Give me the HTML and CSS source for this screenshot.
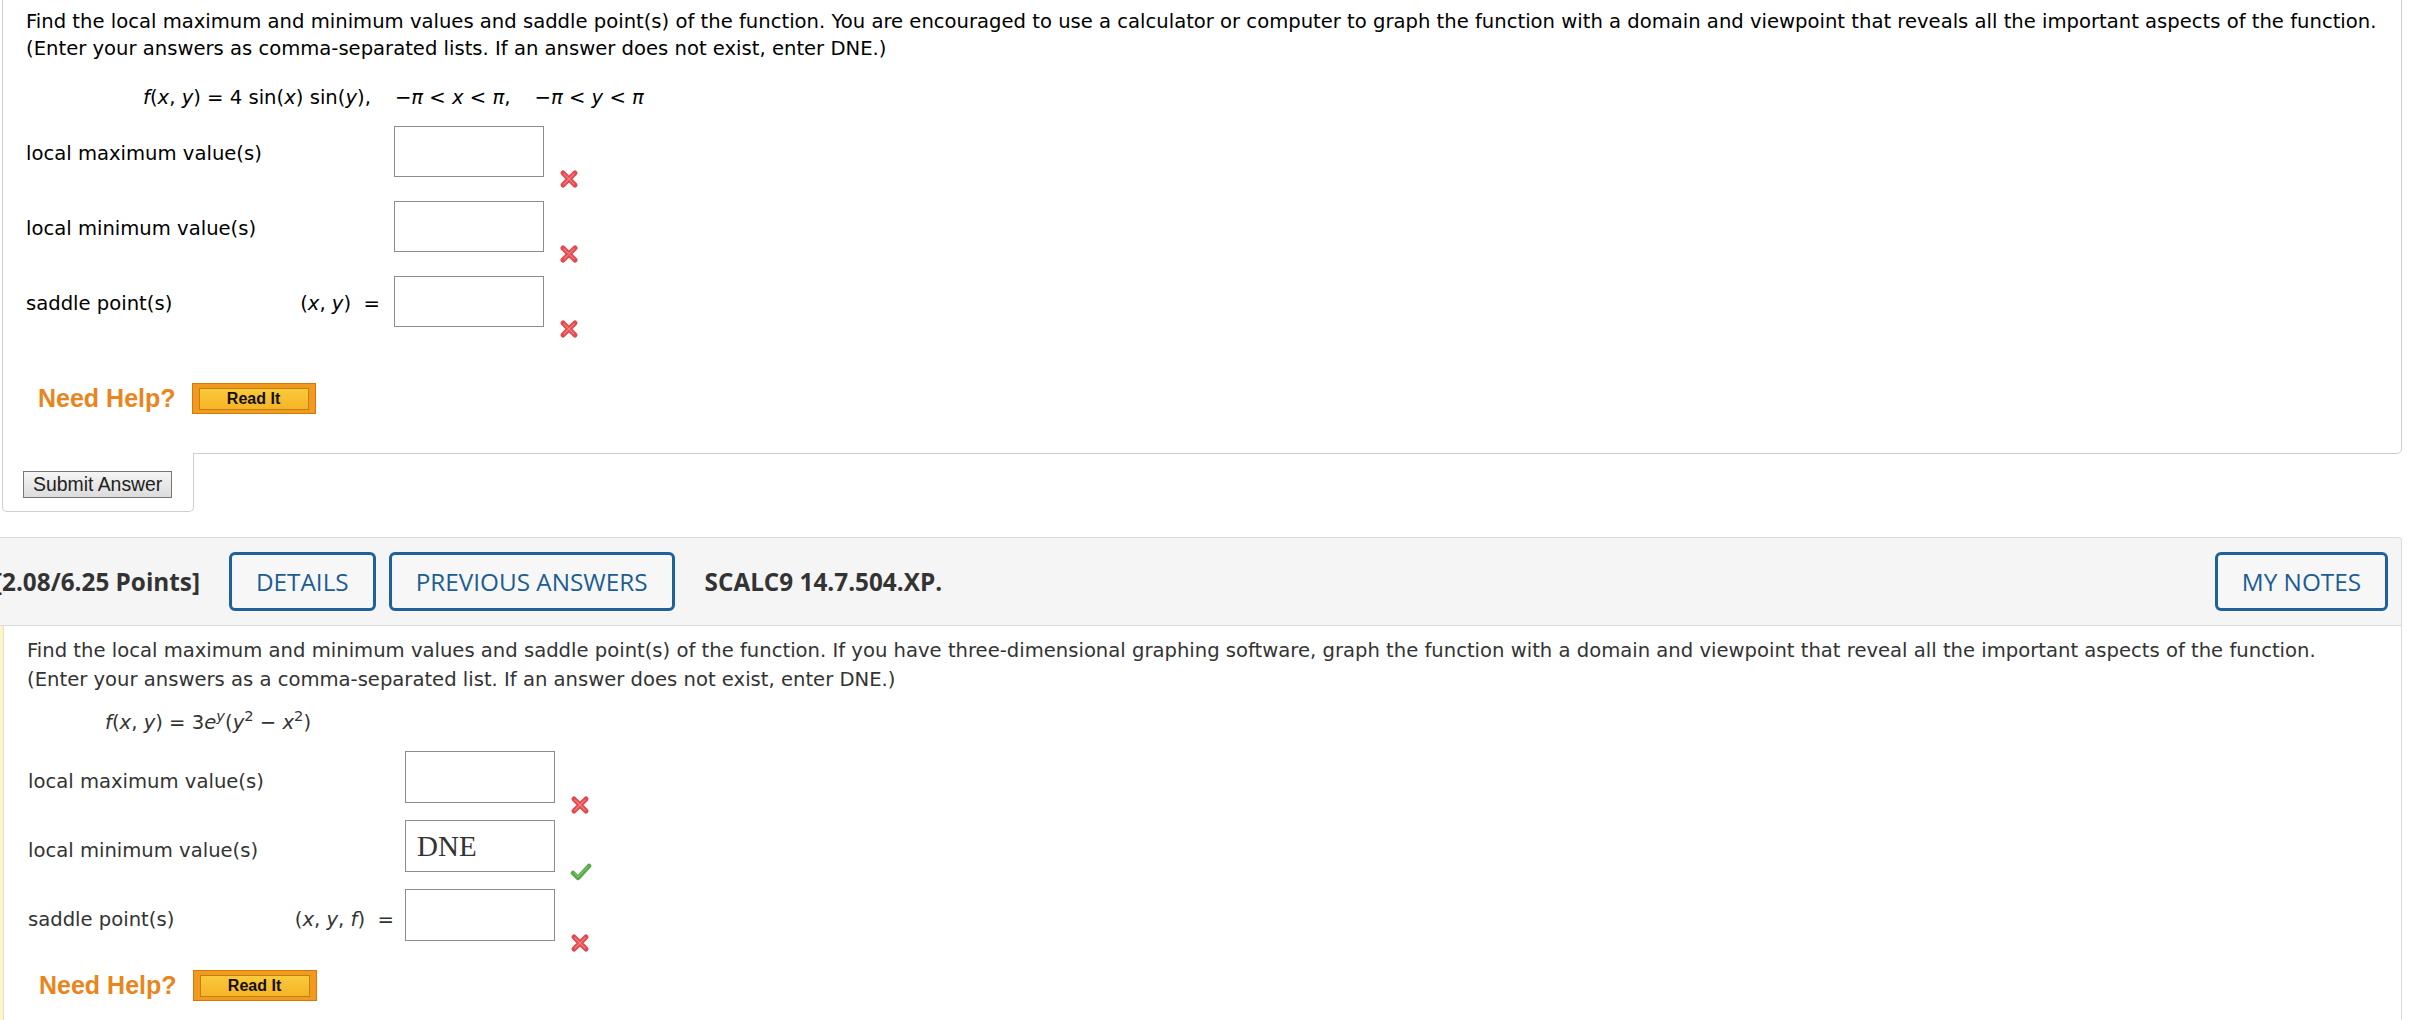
FILE: index.html
```html
<!DOCTYPE html>
<html lang="en">
<head>
    <meta charset="UTF-8">
    <title>Assignment - Question 13</title>
    <link rel="stylesheet" href="styles.css">
</head>
<body>
<div class="page">

    <!-- question 1 (no header visible, scrolled past) -->
    <div class="question q1">
        <div class="q-body">
            <p class="intro">Find the local maximum and minimum values and saddle point(s) of the function. You are encouraged to use a calculator or computer to graph the function with a domain and viewpoint that reveals all the important aspects of the function.<br>(Enter your answers as comma-separated lists. If an answer does not exist, enter DNE.)</p>

            <p class="formula"><i>f</i>(<i>x</i>, <i>y</i>) = 4 sin(<i>x</i>) sin(<i>y</i>),<span class="sep">&minus;<i>&pi;</i> &lt; <i>x</i> &lt; <i>&pi;</i>,</span><span class="sep">&minus;<i>&pi;</i> &lt; <i>y</i> &lt; <i>&pi;</i></span></p>

            <div class="answers">
                <div class="row-label">local maximum value(s)</div>
                <div class="row-input">
                    <input type="text" class="answer-box">
                    <svg class="mark" width="20" height="20" viewBox="0 0 20 20"><path d="M4 4 L16 16 M16 4 L4 16" stroke="#e5474c" stroke-width="5" stroke-linecap="round"/><path d="M5 5 L15 15 M15 5 L5 15" stroke="#f17f82" stroke-width="1.2" stroke-linecap="round"/></svg>
                </div>

                <div class="row-label">local minimum value(s)</div>
                <div class="row-input">
                    <input type="text" class="answer-box">
                    <svg class="mark" width="20" height="20" viewBox="0 0 20 20"><path d="M4 4 L16 16 M16 4 L4 16" stroke="#e5474c" stroke-width="5" stroke-linecap="round"/><path d="M5 5 L15 15 M15 5 L5 15" stroke="#f17f82" stroke-width="1.2" stroke-linecap="round"/></svg>
                </div>

                <div class="row-label">saddle point(s) <span class="eq">(<i>x</i>, <i>y</i>) &nbsp;=</span></div>
                <div class="row-input">
                    <input type="text" class="answer-box">
                    <svg class="mark" width="20" height="20" viewBox="0 0 20 20"><path d="M4 4 L16 16 M16 4 L4 16" stroke="#e5474c" stroke-width="5" stroke-linecap="round"/><path d="M5 5 L15 15 M15 5 L5 15" stroke="#f17f82" stroke-width="1.2" stroke-linecap="round"/></svg>
                </div>
            </div>

            <div class="help">
                <span class="need-help">Need Help?</span>
                <a class="read-it" href="#"><span>Read It</span></a>
            </div>
        </div>
        <div class="submit-tab">
            <button class="submit">Submit Answer</button>
        </div>
    </div>

    <!-- question 2 -->
    <div class="question q2">
        <div class="q-header">
            <span class="points">[2.08/6.25 Points]</span>
            <a class="hdr-btn details" href="#">DETAILS</a>
            <a class="hdr-btn" href="#">PREVIOUS ANSWERS</a>
            <span class="qid">SCALC9 14.7.504.XP.</span>
            <a class="hdr-btn notes" href="#">MY NOTES</a>
        </div>
        <div class="q-body">
            <p class="intro">Find the local maximum and minimum values and saddle point(s) of the function. If you have three-dimensional graphing software, graph the function with a domain and viewpoint that reveal all the important aspects of the function.<br>(Enter your answers as a comma-separated list. If an answer does not exist, enter DNE.)</p>

            <p class="formula"><i>f</i>(<i>x</i>, <i>y</i>) = 3<i>e</i><sup><i>y</i></sup>(<i>y</i><sup>2</sup> &minus; <i>x</i><sup>2</sup>)</p>

            <div class="answers">
                <div class="row-label">local maximum value(s)</div>
                <div class="row-input">
                    <input type="text" class="answer-box">
                    <svg class="mark" width="20" height="20" viewBox="0 0 20 20"><path d="M4 4 L16 16 M16 4 L4 16" stroke="#e5474c" stroke-width="5" stroke-linecap="round"/><path d="M5 5 L15 15 M15 5 L5 15" stroke="#f17f82" stroke-width="1.2" stroke-linecap="round"/></svg>
                </div>

                <div class="row-label">local minimum value(s)</div>
                <div class="row-input">
                    <input type="text" class="answer-box" value="DNE">
                    <svg class="mark check" width="22" height="18" viewBox="0 0 22 18"><path d="M3 10 L8 15 L19 3" fill="none" stroke="#58a94a" stroke-width="4.5" stroke-linecap="round" stroke-linejoin="round"/><path d="M4 10 L8 14 L18 3.5" fill="none" stroke="#8ccf7c" stroke-width="1" stroke-linecap="round"/></svg>
                </div>

                <div class="row-label">saddle point(s) <span class="eq">(<i>x</i>, <i>y</i>, <i>f</i>) &nbsp;=</span></div>
                <div class="row-input">
                    <input type="text" class="answer-box">
                    <svg class="mark" width="20" height="20" viewBox="0 0 20 20"><path d="M4 4 L16 16 M16 4 L4 16" stroke="#e5474c" stroke-width="5" stroke-linecap="round"/><path d="M5 5 L15 15 M15 5 L5 15" stroke="#f17f82" stroke-width="1.2" stroke-linecap="round"/></svg>
                </div>
            </div>

            <div class="help">
                <span class="need-help">Need Help?</span>
                <a class="read-it" href="#"><span>Read It</span></a>
            </div>
        </div>
    </div>

</div>
</body>
</html>
```

FILE: styles.css
```css
body {
    margin: 0;
    background: #fff;
    font-family: "DejaVu Sans", Verdana, sans-serif;
    font-size: 19.6px;
    color: #000;
}
.page {
    width: 2400px;
    padding-left: 2px;
    margin-top: -1px;
}
p {
    margin: 0;
}
i {
    font-style: italic;
}

/* question panels */
.question {
    position: relative;
}
.q-body {
    border: 1px solid #cfcfcf;
    background: #fff;
}
.q1 .q-body {
    padding: 8px 10px 39px 23px;
    border-bottom-right-radius: 5px;
}
.intro {
    line-height: 27px;
    white-space: nowrap;
}
.formula {
    line-height: 27px;
    white-space: nowrap;
}
.formula .sep {
    margin-left: 24px;
}
.q1 .formula {
    margin-top: 22px;
    padding-left: 117px;
}

/* answer rows */
.answers {
    display: grid;
    grid-template-columns: 354px 1fr;
    column-gap: 14px;
    row-gap: 24px;
    margin-top: 15px;
}
.row-label {
    display: flex;
    justify-content: space-between;
    align-items: center;
    padding-top: 4px;
    line-height: 27px;
}
.row-input {
    display: flex;
    align-items: flex-end;
}
.answer-box {
    width: 150px;
    height: 51px;
    box-sizing: border-box;
    border: 1px solid #8c8c8c;
    border-radius: 0;
    padding: 0 11px;
    margin: 0;
    font-family: "Liberation Serif", "Times New Roman", serif;
    font-size: 29px;
    color: #333;
    background: #fff;
}
.mark {
    margin-left: 15px;
    margin-bottom: -12px;
    flex-shrink: 0;
}
.mark.check {
    margin-bottom: -9px;
}

/* need help */
.help {
    display: flex;
    align-items: center;
    margin-top: 56px;
    padding-left: 12px;
}
.need-help {
    font-family: "Liberation Sans", Arial, sans-serif;
    font-weight: bold;
    font-size: 25px;
    color: #e9851d;
    margin-right: 16px;
}
.read-it {
    display: inline-block;
    padding: 4px 6px 3px;
    background: #f39a1e;
    border: 1px solid #d6770e;
    text-decoration: none;
}
.read-it span {
    display: block;
    width: 108px;
    height: 20px;
    line-height: 20px;
    background: linear-gradient(#fbc93c, #f5b426);
    border: 1px solid #b98316;
    text-align: center;
    font-family: "Liberation Sans", Arial, sans-serif;
    font-weight: bold;
    font-size: 16px;
    color: #111;
}

/* submit tab under first panel */
.submit-tab {
    width: 170px;
    margin-top: -1px;
    padding: 18px 0 13px 20px;
    background: #fff;
    border: 1px solid #cfcfcf;
    border-top: none;
    border-radius: 0 0 5px 5px;
}
.submit {
    height: 27px;
    padding: 0 9px;
    font-family: "Liberation Sans", Arial, sans-serif;
    font-size: 19.4px;
    color: #222;
    background: linear-gradient(#f5f5f5, #dcdcdc);
    border: 1px solid #767676;
    border-radius: 0;
    cursor: pointer;
}

/* second question */
.q2 {
    margin-top: 25px;
    margin-left: -2px;
}
.q-header {
    display: flex;
    align-items: center;
    padding: 14px 13px 14px 0;
    background: #f5f5f5;
    border-top: 1px solid #dcdcdc;
    border-bottom: 1px solid #dcdcdc;
    border-right: 1px solid #dcdcdc;
    border-top-right-radius: 4px;
    font-family: "Open Sans", sans-serif;
    font-size: 24.3px;
    color: #333;
    overflow: hidden;
}
.points {
    font-weight: bold;
    margin-left: -6px;
    margin-right: 29px;
    white-space: nowrap;
}
.qid {
    font-weight: bold;
    margin-left: 30px;
}
.hdr-btn {
    display: flex;
    align-items: center;
    height: 59px;
    box-sizing: border-box;
    padding: 0 24px;
    border: 3px solid #1e6299;
    border-radius: 6px;
    background: #f7f7f7;
    color: #1b5d94;
    text-decoration: none;
    white-space: nowrap;
}
.hdr-btn.details {
    margin-right: 13px;
}
.hdr-btn.notes {
    margin-left: auto;
}
.q2 .q-body {
    border: none;
    border-right: 1px solid #dcdcdc;
    border-left: 3px solid #fcf5c6;
    box-shadow: inset 1px 0 0 #e2dfc4;
    padding: 10px 10px 40px 24px;
    color: #333;
}
.q2 .intro,
.q2 .formula {
    line-height: 29px;
}
.q2 .formula {
    margin-top: 14px;
    padding-left: 78px;
}
.q2 sup {
    font-size: 0.75em;
    line-height: 0;
}
.q2 .answers {
    grid-template-columns: 366px 1fr;
    column-gap: 11px;
    row-gap: 17px;
    margin-top: 14px;
    padding-left: 1px;
}
.q2 .row-label {
    padding-top: 8px;
}
.q2 .answer-box {
    height: 52px;
}
.q2 .help {
    margin-top: 29px;
}
```
